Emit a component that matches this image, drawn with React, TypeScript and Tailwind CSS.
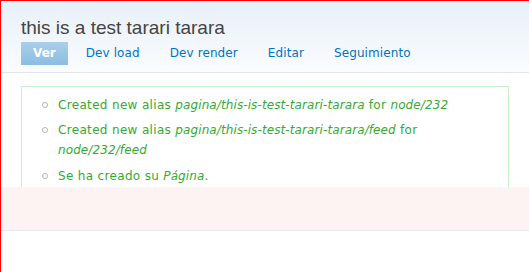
import React from 'react';

const tabs = ['Dev load', 'Dev render', 'Editar', 'Seguimiento'];

const Bullet = () => (
  <span className="absolute left-[-16px] top-[7px] h-[6px] w-[6px] rounded-full border border-[#b4b4b4]" />
);

// italic path text in the messages runs a bit tighter than the plain text
const I = ({ children }: { children: React.ReactNode }) => (
  <em className="tracking-[0.1px]">{children}</em>
);

export default function App() {
  return (
    <div className="h-[272px] w-[529px] overflow-hidden border-l border-t border-[#ff0000] bg-white font-['DejaVu_Sans',sans-serif] text-[12px]">
      {/* page header */}
      <div className="h-[72px] border-b border-[#e1e5ea] bg-gradient-to-b from-[#e8f0f8] to-[#fafcfe] px-5 pt-[16px]">
        <h1 className="font-['Liberation_Sans',Arial,sans-serif] text-[19px] leading-[22px] text-[#444]">
          this is a test tarari tarara
        </h1>
        <ul className="mt-[3px] flex gap-[6px]">
          <li className="h-[23px] bg-gradient-to-b from-[#a9cfea] to-[#8cbde1] px-3 font-bold leading-[23px] text-white">
            Ver
          </li>
          {tabs.map((t) => (
            <li key={t} className="h-[23px] px-3 leading-[23px] tracking-[0.1px] text-[#0074bd]">
              {t}
            </li>
          ))}
        </ul>
      </div>

      {/* messages */}
      <div className="h-[114px] overflow-hidden px-5 pt-[13px]">
        <div className="border border-[#c7f2c8] pb-4 pl-[36px] pr-4 pt-[8px] tracking-[0.33px] text-[#3a3]">
          <ul className="leading-[20px]">
            <li className="relative mb-[5px]">
              <Bullet />
              Created new alias <I>pagina/this-is-test-tarari-tarara</I> for <I>node/232</I>
            </li>
            <li className="relative mb-[6px]">
              <Bullet />
              Created new alias <I>pagina/this-is-test-tarari-tarara/feed</I> for <I>node/232/feed</I>
            </li>
            <li className="relative">
              <Bullet />
              Se ha creado su <I>Página</I>.
            </li>
          </ul>
        </div>
      </div>

      <div className="h-[44px] border-b border-[#e4eaf2] bg-[#fdf3f3]" />
    </div>
  );
}
